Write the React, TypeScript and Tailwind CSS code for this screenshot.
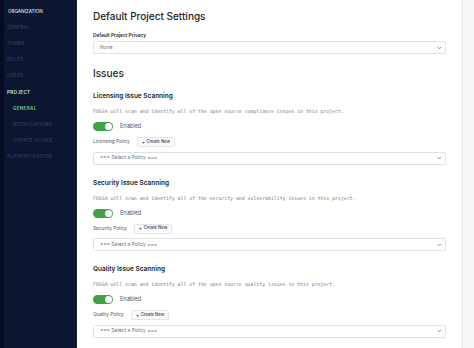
import React from 'react';

const navItems = [
  { label: 'ORGANIZATION', kind: 'head' },
  { label: 'GENERAL', kind: 'item' },
  { label: 'TEAMS', kind: 'item' },
  { label: 'ROLES', kind: 'item' },
  { label: 'USERS', kind: 'item' },
  { label: 'PROJECT', kind: 'section' },
  { label: 'GENERAL', kind: 'active' },
  { label: 'NOTIFICATIONS', kind: 'sub' },
  { label: 'UPDATE HOOKS', kind: 'sub' },
  { label: 'AUTHENTICATION', kind: 'item' },
];

const Chevron = () => (
  <svg width="5" height="4" viewBox="0 0 5 4" className="shrink-0">
    <path d="M0.8 1 L2.5 2.8 L4.2 1" fill="none" stroke="#6b7280" strokeWidth="0.8" />
  </svg>
);

const Select = ({ text }: { text: string }) => (
  <div className="flex h-[13px] items-center justify-between rounded-[2px] border border-[#dfe2e6] bg-white pl-[6px] pr-[3px]">
    <span className="text-[5px] text-[#6b7280]">{text}</span>
    <Chevron />
  </div>
);

const Toggle = () => (
  <div className="flex h-[9px] w-[20px] items-center justify-end rounded-full bg-[#43a047] pr-[1px]">
    <div className="h-[7px] w-[7px] rounded-full bg-white" />
  </div>
);

const Scanning = ({ title, desc, policy }: { title: string; desc: string; policy: string }) => (
  <div className="mt-[13px] flex flex-col">
    <h3 className="text-[6.5px] font-semibold leading-[10px] text-[#222328]">{title}</h3>
    <p className="mt-[7px] font-['DejaVu_Sans_Mono',monospace] text-[4.85px] leading-[6px] text-[#767d88]">{desc}</p>
    <div className="mt-[8px] flex h-[9px] items-center gap-[7px]">
      <Toggle />
      <span className="text-[5.6px] text-[#4b5563]">Enabled</span>
    </div>
    <div className="mt-[6px] flex h-[10px] items-center gap-[7px]">
      <span className="text-[4.8px] text-[#4b5563]">{policy}</span>
      <button className="flex h-[10px] items-center gap-[1.5px] rounded-[2px] border border-[#e3e5e8] bg-[#fafafa] px-[4px] text-[4.2px] font-medium text-[#374151]">
        <span className="text-[5px] leading-none">+</span> Create New
      </button>
    </div>
    <div className="mt-[4.5px]">
      <Select text="=== Select a Policy ===" />
    </div>
  </div>
);

export default function App() {
  return (
    <div className="flex h-[348px] w-full overflow-hidden bg-white font-['Inter',sans-serif]">
      <aside className="flex w-[77px] shrink-0 bg-[#0c1631]">
        <div className="w-[4px] bg-[#060c22]" />
        <nav className="flex flex-1 flex-col border-r border-[#18223d] pt-[4px]">
          {navItems.map((n, i) => (
            <div
              key={i}
              className={`flex h-[16.2px] items-center text-[4.6px] tracking-[0.3px] ${
                n.kind === 'head'
                  ? 'pl-[4px] text-[4.2px] font-medium tracking-[0px] text-[#dfe4ee]'
                  : n.kind === 'section'
                  ? 'pl-[3px] font-semibold text-[#c9efd5]'
                  : n.kind === 'active'
                  ? 'pl-[9px] font-semibold text-[#62cf86]'
                  : n.kind === 'sub'
                  ? 'pl-[9px] text-[#3c4763]'
                  : 'pl-[3px] text-[#3c4763]'
              }`}
            >
              {n.label}
            </div>
          ))}
        </nav>
      </aside>

      <main className="flex flex-1 flex-col px-[16px] pt-[10px]">
        <h1 className="text-[10px] font-medium leading-[12px] text-[#222328]">Default Project Settings</h1>
        <label className="mt-[10px] text-[4.8px] font-semibold leading-[6px] text-[#222328]">Default Project Privacy</label>
        <div className="mt-[3px]">
          <Select text="None" />
        </div>

        <h2 className="mt-[12.5px] text-[10px] font-medium leading-[12px] text-[#222328]">Issues</h2>
        <div className="-mt-[0.5px]">
          <Scanning
            title="Licensing Issue Scanning"
            desc="FOSSA will scan and identify all of the open source compliance issues in this project."
            policy="Licensing Policy"
          />
        </div>
        <Scanning
          title="Security Issue Scanning"
          desc="FOSSA will scan and identify all of the security and vulnerability issues in this project."
          policy="Security Policy"
        />
        <Scanning
          title="Quality Issue Scanning"
          desc="FOSSA will scan and identify all of the open source quality issues in this project."
          policy="Quality Policy"
        />
      </main>

      <div className="w-[12px] shrink-0 border-l border-[#e6e8eb] bg-[#f5f6f8]" />
    </div>
  );
}
